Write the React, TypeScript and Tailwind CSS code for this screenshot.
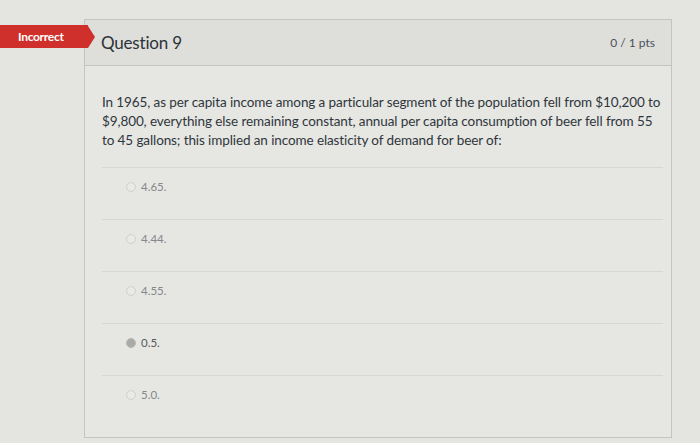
import React from "react";

const options = [
  { label: "4.65.", selected: false },
  { label: "4.44.", selected: false },
  { label: "4.55.", selected: false },
  { label: "0.5.", selected: true },
  { label: "5.0.", selected: false },
];

export default function App() {
  return (
    <div
      className="w-[700px] h-[443px] overflow-hidden bg-[#e4e4e1] relative"
      style={{ fontFamily: "Lato, 'Open Sans', sans-serif" }}
    >
      <div className="pt-[19px] pl-[84px] pr-[28px]">
        <div className="border border-[#c4c4c2] bg-[#e6e6e3] h-[419px]">
          <div className="h-[46px] bg-[#dededb] border-b border-[#c4c4c2] flex items-center justify-between pl-[16px] pr-[16px]">
            <span className="text-[17px] text-[#2b3338] tracking-[-0.2px]">Question 9</span>
            <span className="text-[12px] text-[#4a5156]">0 / 1 pts</span>
          </div>
          <div className="pl-[17px] pr-[8px] pt-[27px]">
            <p className="text-[13.5px] leading-[19px] text-[#2f363b] tracking-[-0.1px]">
              In 1965, as per capita income among a particular segment of the population fell from $10,200 to
              $9,800, everything else remaining constant, annual per capita consumption of beer fell from 55
              to 45 gallons; this implied an income elasticity of demand for beer of:
            </p>
            <div className="mt-[17px]">
              {options.map((o, i) => (
                <div
                  key={i}
                  className="h-[52px] border-t border-[#d6d6d3] flex items-center pl-[24px] pb-[13px]"
                >
                  <span
                    className={
                      o.selected
                        ? "w-[10px] h-[10px] rounded-full bg-[#a9aba8] border border-[#b8b9b6]"
                        : "w-[10px] h-[10px] rounded-full border border-[#cfd0cd] bg-[#e9e9e6]"
                    }
                  />
                  <span
                    className={
                      o.selected
                        ? "ml-[5px] text-[11.5px] text-[#55595c]"
                        : "ml-[5px] text-[11.5px] text-[#85888a]"
                    }
                  >
                    {o.label}
                  </span>
                </div>
              ))}
            </div>
          </div>
        </div>
      </div>
      <div className="absolute left-0 top-[25px] h-[23px] w-[95px] flex items-center">
        <div className="h-full w-[88px] bg-[#d0302c] flex items-center pl-[18px]">
          <span className="text-white text-[12px] font-bold tracking-[-0.3px]">Incorrect</span>
        </div>
        <div className="w-0 h-0 border-t-[11.5px] border-b-[11.5px] border-l-[7px] border-t-transparent border-b-transparent border-l-[#d0302c]" />
      </div>
    </div>
  );
}
